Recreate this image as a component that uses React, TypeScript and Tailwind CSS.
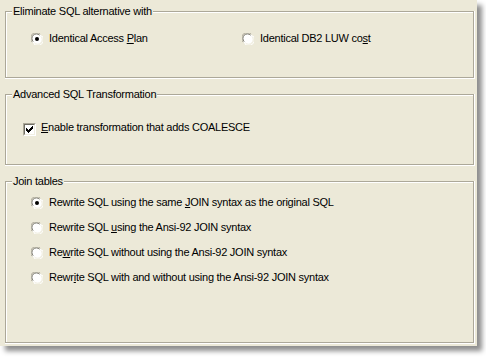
function Radio({ checked }: { checked?: boolean }) {
  return (
    <svg width="12" height="12" viewBox="0 0 12 12" className="shrink-0">
      <circle cx="6" cy="6" r="5.5" fill="#fff" />
      <path d="M1.2 9.2 A5.5 5.5 0 0 1 9.2 1.2" fill="none" stroke="#ACA899" strokeWidth="1" />
      <path d="M2.2 8.6 A4.3 4.3 0 0 1 8.6 2.2" fill="none" stroke="#716F64" strokeWidth="1" />
      <path d="M10.8 2.8 A5.5 5.5 0 0 1 2.8 10.8" fill="none" stroke="#fff" strokeWidth="1" />
      <path d="M9.8 3.4 A4.3 4.3 0 0 1 3.4 9.8" fill="none" stroke="#F1EFE2" strokeWidth="1" />
      {checked && <circle cx="6" cy="6" r="2" fill="#000" />}
    </svg>
  );
}

function Checkbox({ checked }: { checked?: boolean }) {
  return (
    <span className="block w-[13px] h-[13px] shrink-0 border-t border-l border-[#ACA899] border-r border-b border-r-white border-b-white">
      <span className="flex items-center justify-center w-full h-full bg-white border-t border-l border-[#716F64] border-r border-b border-r-[#F1EFE2] border-b-[#F1EFE2]">
        {checked && (
          <svg width="7" height="7" viewBox="0 0 7 7">
            <path d="M0 2h1v1h1v1h1V3h1V2h1V1h1V0h1v3H6v1H5v1H4v1H3v1H2V6H1V5H0z" fill="#000" />
          </svg>
        )}
      </span>
    </span>
  );
}

function Group({
  label,
  height,
  children,
}: {
  label: string;
  height: string;
  children: React.ReactNode;
}) {
  return (
    <div className={`relative w-[470px] ${height} border-r border-b border-white`}>
      <div className="h-full border border-[#ACA899] shadow-[inset_1px_1px_0_#fff]">{children}</div>
      <span className="absolute left-[7px] top-[-6px] bg-[#ECE9D8] px-[1px] leading-[13px]">
        {label}
      </span>
    </div>
  );
}

function Option({
  checked,
  children,
  className = "",
}: {
  checked?: boolean;
  children: React.ReactNode;
  className?: string;
}) {
  return (
    <div className={`flex items-center gap-[6px] h-[13px] ${className}`}>
      <Radio checked={checked} />
      <span className="leading-[13px] whitespace-nowrap">{children}</span>
    </div>
  );
}

export default function App() {
  return (
    <div className="w-[486px] h-[357px] bg-white">
      <div
        className="w-[477px] h-[346px] bg-[#ECE9D8] pl-[5px] pt-[11px] flex flex-col gap-[15px] text-[11px] tracking-[-0.25px] text-black shadow-[5px_5px_5px_rgba(0,0,0,0.45)]"
        style={{ fontFamily: '"Liberation Sans", Arial, sans-serif' }}
      >
        <Group label="Eliminate SQL alternative with" height="h-[68px]">
          <div className="flex pt-[20px] pl-[25px]">
            <Option checked className="w-[211px]">
              Identical Access <u>P</u>lan
            </Option>
            <Option>
              Identical DB2 LUW co<u>s</u>t
            </Option>
          </div>
        </Group>

        <Group label="Advanced SQL Transformation" height="h-[72px]">
          <div className="flex items-start gap-[5px] pt-[26px] pl-[17px]">
            <span className="pt-[2px]">
              <Checkbox checked />
            </span>
            <span className="leading-[13px] whitespace-nowrap">
              <u>E</u>nable transformation that adds COALESCE
            </span>
          </div>
        </Group>

        <Group label="Join tables" height="h-[163px]">
          <div className="flex flex-col gap-[12px] pt-[14px] pl-[25px]">
            <Option checked>
              Rewrite SQL using the same <u>J</u>OIN syntax as the original SQL
            </Option>
            <Option>
              Rewrite SQL <u>u</u>sing the Ansi-92 JOIN syntax
            </Option>
            <Option>
              Re<u>w</u>rite SQL without using the Ansi-92 JOIN syntax
            </Option>
            <Option>
              Rewr<u>i</u>te SQL with and without using the Ansi-92 JOIN syntax
            </Option>
          </div>
        </Group>
      </div>
    </div>
  );
}
